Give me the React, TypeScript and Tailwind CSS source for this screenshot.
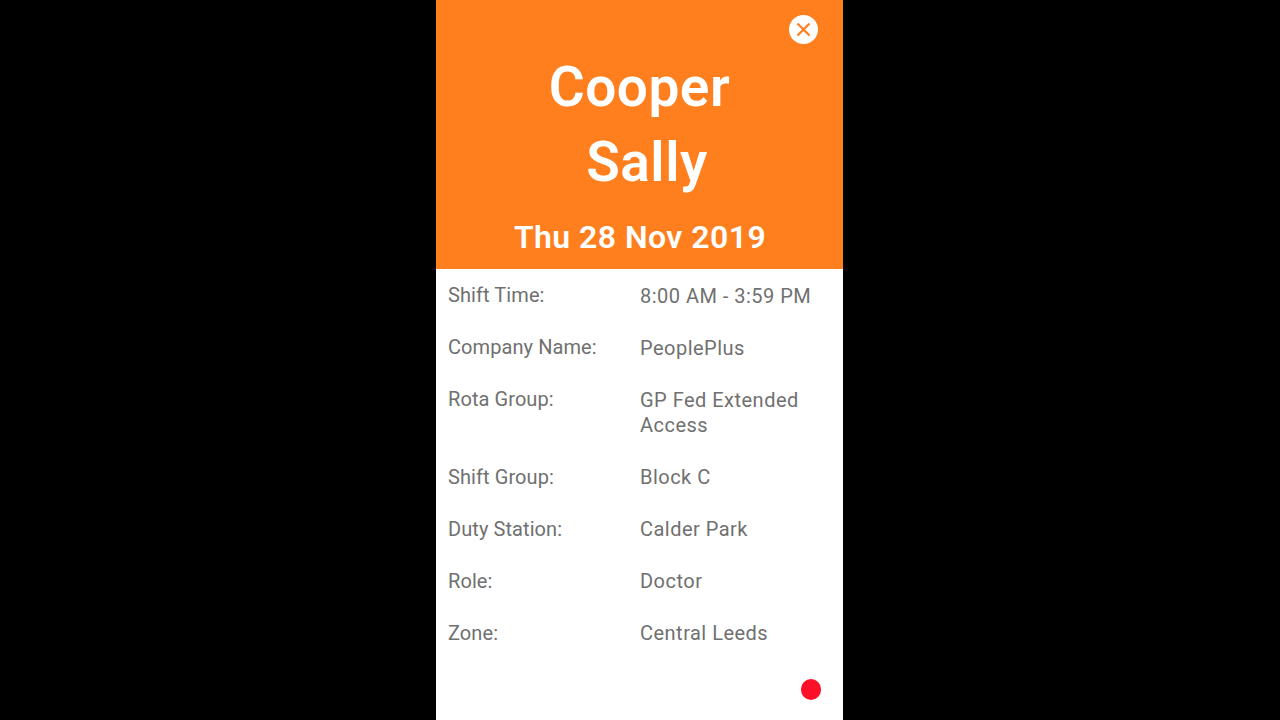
const rows = [
  { label: "Shift Time:", value: "8:00 AM - 3:59 PM" },
  { label: "Company Name:", value: "PeoplePlus" },
  { label: "Rota Group:", value: "GP Fed Extended Access" },
  { label: "Shift Group:", value: "Block C" },
  { label: "Duty Station:", value: "Calder Park" },
  { label: "Role:", value: "Doctor" },
  { label: "Zone:", value: "Central Leeds" },
];

export default function App() {
  return (
    <div className="h-[720px] w-[1280px] overflow-hidden bg-black pl-[436px] font-['Roboto',sans-serif]">
      <div className="relative h-[720px] w-[407px] bg-white">
        <div className="flex h-[269px] flex-col items-center bg-[#ff7f1e] text-white">
          <h1 className="mt-[50px] text-[55px] leading-[75px] font-semibold tracking-[0.5px]">Cooper</h1>
          <h1 className="ml-[15px] text-[55px] leading-[75px] font-semibold tracking-[0.5px]">Sally</h1>
          <p className="mt-[17px] ml-[1px] text-[32px] leading-[40px] font-semibold tracking-[0.45px]">Thu 28 Nov 2019</p>
        </div>

        <button className="absolute top-[15px] left-[353px] flex h-[29px] w-[29px] items-center justify-center rounded-full bg-white">
          <svg width="15" height="15" viewBox="0 0 15 15" fill="none" stroke="#ff7f1e" strokeWidth="2.2">
            <path d="M1.5 1.5L13.5 13.5M13.5 1.5L1.5 13.5" />
          </svg>
        </button>

        <div className="flex flex-col gap-[26.65px] pt-[14.1px] pl-[12px] text-[20px] leading-[25px] text-[#707070]">
          {rows.map((row) => (
            <div key={row.label} className="flex">
              <div className="w-[192px] tracking-[0.08px]">{row.label}</div>
              <div className="mt-[0.5px] w-[190px] tracking-[0.48px]">{row.value}</div>
            </div>
          ))}
        </div>

        <div className="absolute top-[679px] left-[365px] h-[21px] w-[20px] rounded-full bg-[#fb1028]"></div>
      </div>
    </div>
  );
}
